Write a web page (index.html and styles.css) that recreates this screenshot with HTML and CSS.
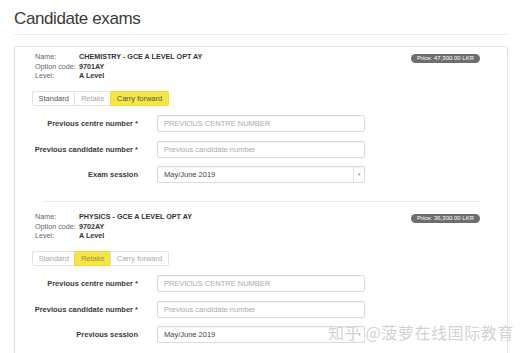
FILE: index.html
```html
<!DOCTYPE html>
<html>
  <head>
    <title>Candidate exams</title>
    <meta charset="UTF-8">
    <meta name="viewport" content="width=device-width, initial-scale=1.0">
    <link rel="stylesheet" href="styles.css">
  </head>
  <body>
    <h1 class="page-title">Candidate exams</h1>
    <div class="title-rule"></div>

    <div class="card">
      <div class="exam first">
        <div class="exam-head">
          <div class="info">
            <span class="info-label">Name:</span><span class="info-value">CHEMISTRY - GCE A LEVEL OPT AY</span>
            <span class="info-label">Option code:</span><span class="info-value">9701AY</span>
            <span class="info-label">Level:</span><span class="info-value">A Level</span>
          </div>
          <span class="price">Price: 47,300.00 LKR</span>
        </div>
        <div class="tabs">
          <div class="tab">Standard</div>
          <div class="tab muted">Retake</div>
          <div class="tab active">Carry forward</div>
        </div>
        <div class="form">
          <label class="form-label">Previous centre number *</label>
          <div class="field placeholder">PREVIOUS CENTRE NUMBER</div>
          <label class="form-label">Previous candidate number *</label>
          <div class="field placeholder">Previous candidate number</div>
          <label class="form-label">Exam session</label>
          <div class="field select"><span class="select-text">May/June 2019</span><span class="caret">&#9662;</span></div>
        </div>
      </div>

      <div class="divider"></div>

      <div class="exam">
        <div class="exam-head">
          <div class="info">
            <span class="info-label">Name:</span><span class="info-value">PHYSICS - GCE A LEVEL OPT AY</span>
            <span class="info-label">Option code:</span><span class="info-value">9702AY</span>
            <span class="info-label">Level:</span><span class="info-value">A Level</span>
          </div>
          <span class="price">Price: 36,300.00 LKR</span>
        </div>
        <div class="tabs">
          <div class="tab muted">Standard</div>
          <div class="tab active muted">Retake</div>
          <div class="tab muted">Carry forward</div>
        </div>
        <div class="form">
          <label class="form-label">Previous centre number *</label>
          <div class="field placeholder">PREVIOUS CENTRE NUMBER</div>
          <label class="form-label">Previous candidate number *</label>
          <div class="field placeholder">Previous candidate number</div>
          <label class="form-label">Previous session</label>
          <div class="field select"><span class="select-text">May/June 2019</span><span class="caret">&#9662;</span></div>
        </div>
      </div>
    </div>

    <div class="watermark">知乎 @菠萝在线国际教育</div>
  </body>
</html>
```

FILE: styles.css
```css
* {
  box-sizing: border-box;
}

html, body {
  margin: 0;
  height: 100%;
  overflow: hidden;
  background-color: #fff;
  font-family: "Liberation Sans", Arial, sans-serif;
  color: #333;
}

.page-title {
  margin: 0;
  padding: 8px 0 0 14px;
  font-size: 17px;
  line-height: 22px;
  font-weight: normal;
  letter-spacing: -0.4px;
  color: #3a3a3a;
}

.title-rule {
  margin: 4px 19px 0 14px;
  border-top: 1px solid #eee;
}

.card {
  margin: 11px 19px 0 14px;
  border: 1px solid #e2e2e2;
  border-radius: 3px;
  box-shadow: 0 1px 2px rgba(0, 0, 0, 0.05);
  height: 400px;
}

.exam {
  padding: 10px 27px 18px 17px;
}

.exam.first {
  padding-top: 5px;
}

.divider {
  margin: 0 27px;
  border-top: 1px solid #eee;
}

.exam-head {
  display: flex;
  justify-content: space-between;
  align-items: flex-start;
}

.info {
  display: grid;
  grid-template-columns: 44px auto;
  padding-left: 3px;
  font-size: 7.2px;
  line-height: 9.5px;
}

.info-label {
  color: #666;
}

.info-value {
  font-weight: bold;
  color: #333;
}

.price {
  margin-top: 2px;
  padding: 0 6px;
  height: 9px;
  line-height: 9px;
  border-radius: 5px;
  background-color: #6e6e6e;
  color: #fff;
  font-size: 6px;
}

.tabs {
  display: flex;
  margin-top: 10.5px;
}

.tab {
  height: 15px;
  line-height: 13px;
  padding: 0 5.5px;
  border: 1px solid #e2e2e2;
  margin-left: -1px;
  font-size: 7.5px;
  color: #555;
  background-color: #fff;
}

.tab:first-child {
  margin-left: 0;
  border-radius: 2px 0 0 2px;
}

.tab:last-child {
  border-radius: 0 2px 2px 0;
}

.tab.muted {
  color: #aaa;
}

.tab.active {
  background-color: #f6e645;
  border-color: #f0dc3a;
  color: #555;
}

.tab.active.muted {
  color: #9a8f50;
}

.form {
  display: grid;
  grid-template-columns: 106px 208px;
  column-gap: 19px;
  row-gap: 8.5px;
  margin-top: 9px;
}

.form-label {
  align-self: center;
  text-align: right;
  font-size: 7.5px;
  font-weight: bold;
  color: #3a3a3a;
}

.field {
  height: 17px;
  line-height: 15px;
  padding: 0 6px;
  border: 1px solid #d9d9d9;
  border-radius: 2px;
  font-size: 7.5px;
  color: #444;
  box-shadow: inset 0 1px 1px rgba(0, 0, 0, 0.04);
}

.field.placeholder {
  color: #aaa;
}

.field.select {
  display: flex;
  padding-right: 0;
}

.select-text {
  flex: 1;
}

.caret {
  width: 11px;
  border-left: 1px solid #e2e2e2;
  text-align: center;
  font-size: 5px;
  color: #999;
}

.watermark {
  position: absolute;
  right: 13px;
  top: 322px;
  font-family: "Noto Sans CJK SC", sans-serif;
  font-size: 16px;
  line-height: 20px;
  letter-spacing: 0.6px;
  color: rgba(150, 150, 150, 0.45);
  text-shadow: 0 0 1px #fff, 0 0 1px #fff;
}
```
